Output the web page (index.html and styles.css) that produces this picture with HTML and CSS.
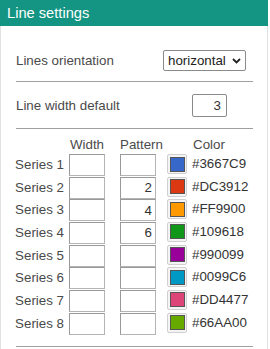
FILE: index.html
```html
<!DOCTYPE html>
<html lang="en">
<head>
    <meta charset="UTF-8">
    <meta name="viewport" content="width=device-width, initial-scale=1.0">
    <title>Line settings</title>
    <link rel="stylesheet" href="styles.css">
</head>
<body>
    <div class="panel">
        <div class="panel-title">Line settings</div>

        <div class="panel-body">
            <div class="row row-orientation">
                <label for="orientation">Lines orientation</label>
                <div class="select-wrap">
                    <select id="orientation">
                        <option>horizontal</option>
                        <option>vertical</option>
                    </select>
                    <svg class="chevron" width="9" height="6" viewBox="0 0 9 6">
                        <path d="M1 1 L4.5 4.5 L8 1" fill="none" stroke="#222" stroke-width="1.8"/>
                    </svg>
                </div>
            </div>

            <div class="row row-width">
                <label for="line-width">Line width default</label>
                <input type="text" id="line-width" class="num-input" value="3">
            </div>

            <div class="series-grid" id="series-grid">
                <div></div>
                <div class="col-head">Width</div>
                <div class="col-head">Pattern</div>
                <div class="col-head col-head-color">Color</div>
            </div>
        </div>
    </div>

    <script>
        // series name, pattern, colour
        const series = [
            ['Series 1', '', '#3667C9'],
            ['Series 2', '2', '#DC3912'],
            ['Series 3', '4', '#FF9900'],
            ['Series 4', '6', '#109618'],
            ['Series 5', '', '#990099'],
            ['Series 6', '', '#0099C6'],
            ['Series 7', '', '#DD4477'],
            ['Series 8', '', '#66AA00']
        ];

        const grid = document.getElementById('series-grid');

        series.forEach(([name, pattern, color]) => {
            const label = document.createElement('div');
            label.className = 'series-name';
            label.textContent = name;

            const width = document.createElement('input');
            width.type = 'text';
            width.className = 'cell-input';

            const pat = document.createElement('input');
            pat.type = 'text';
            pat.className = 'cell-input';
            pat.value = pattern;

            const swatch = document.createElement('div');
            swatch.className = 'swatch';
            const chip = document.createElement('span');
            chip.className = 'swatch-chip';
            chip.style.background = color;
            swatch.appendChild(chip);

            const hex = document.createElement('div');
            hex.className = 'hex';
            hex.textContent = color;

            grid.append(label, width, pat, swatch, hex);
        });
    </script>
</body>
</html>
```

FILE: styles.css
```css
body {
    margin: 0;
    font-family: 'Liberation Sans', Arial, sans-serif;
    font-size: 13.33px;
    color: #4a4a4a;
    background-color: white;
}

.panel {
    width: 268px;
}

.panel-title {
    height: 26px;
    line-height: 26px;
    padding-left: 7px;
    background-color: #149482;
    color: white;
    font-size: 14.67px;
}

.panel-body {
    padding: 0 14px 0 15px;
    border-left: 1px solid #e2e2e2;
    border-right: 1px solid #e2e2e2;
    height: 323px;
}

.row {
    display: flex;
    align-items: center;
    justify-content: space-between;
    border-bottom: 1px solid #a0a0a0;
}

.row-orientation {
    padding: 24px 7px 10px 0;
}

.row-width {
    padding: 12px 26px 11px 0;
}

.select-wrap {
    position: relative;
}

select {
    appearance: none;
    width: 83px;
    height: 21px;
    padding: 0 0 0 4px;
    border: 1px solid #8a8a8a;
    border-radius: 2px;
    background: white;
    font-family: inherit;
    font-size: 13.33px;
    color: #222;
}

.chevron {
    position: absolute;
    right: 5px;
    top: 8px;
    pointer-events: none;
}

.num-input {
    width: 35px;
    height: 23px;
    box-sizing: border-box;
    padding: 0 5px 0 0;
    border: 1px solid #8a8a8a;
    border-radius: 2px;
    text-align: right;
    font-family: inherit;
    font-size: 13.33px;
    color: #333;
}

.series-grid {
    display: grid;
    grid-template-columns: 53px 51px 47px 25px auto;
    grid-template-rows: 25px;
    grid-auto-rows: 22.67px;
    align-items: center;
    padding-bottom: 11px;
    border-bottom: 1px solid #a0a0a0;
}

.col-head {
    align-self: start;
    padding-top: 8px;
    line-height: 16px;
    width: 36px;
    text-align: center;
}

.col-head-color {
    grid-column: 4 / 6;
    width: auto;
    text-align: left;
    padding-left: 26px;
}

.series-name {
    margin-left: -4px;
    text-align: right;
    padding-right: 5px;
    white-space: nowrap;
    line-height: 21px;
    align-self: start;
}

.cell-input {
    width: 36px;
    height: 22px;
    box-sizing: border-box;
    padding: 0 3px 0 0;
    border: 1px solid #b4b4b4;
    border-top-color: #999;
    border-left-color: #999;
    text-align: right;
    font-family: inherit;
    font-size: 13.33px;
    color: #333;
    align-self: start;
}

.swatch {
    width: 20px;
    height: 20px;
    box-sizing: border-box;
    border: 1px solid #d0d0d0;
    border-radius: 2px;
    background: #f4f4f4;
    display: flex;
    align-items: center;
    justify-content: center;
    align-self: start;
}

.swatch-chip {
    width: 13px;
    height: 13px;
    border: 1px solid #555;
}

.hex {
    color: #333;
    align-self: start;
    line-height: 20px;
}
```
